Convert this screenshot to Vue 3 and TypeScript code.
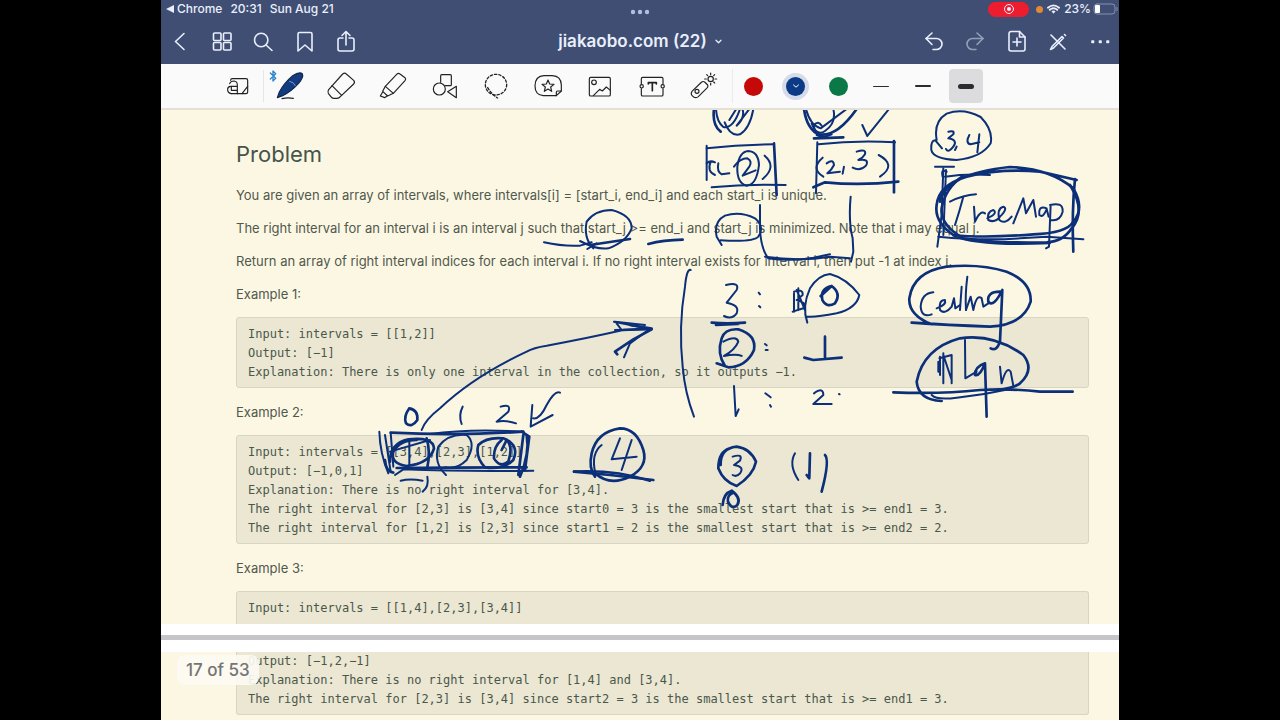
<script setup lang="ts">
import { ref } from 'vue'

interface Icon {
  label: string
  box: string
  paths: string[]
  faded?: boolean
}

interface InkGroup {
  x: number
  y: number
  thin: string[]
  thick?: string[]
}

const leftNav: Icon[] = [
  { label: 'Back', box: '0 0 24 24', paths: ['M16 4.5L7.5 12.5l8.500 8'] },
  {
    label: 'Thumbnails',
    box: '0 0 24 24',
    paths: ['M4.500 4h5.500a1 1 0 0 1 1 1v5.500a1 1 0 0 1-1 1H4.500a1 1 0 0 1-1-1V5a1 1 0 0 1 1-1z', 'M14.500 4H20a1 1 0 0 1 1 1v5.500a1 1 0 0 1-1 1h-5.500a1 1 0 0 1-1-1V5a1 1 0 0 1 1-1z', 'M4.500 13.500h5.500a1 1 0 0 1 1 1V20a1 1 0 0 1-1 1H4.500a1 1 0 0 1-1-1v-5.500a1 1 0 0 1 1-1z', 'M14.500 13.500H20a1 1 0 0 1 1 1V20a1 1 0 0 1-1 1h-5.500a1 1 0 0 1-1-1v-5.500a1 1 0 0 1 1-1z'],
  },
  { label: 'Search', box: '0 0 24 24', paths: ['M3.500 11a6.700 6.700 0 1 0 13.400 0a6.700 6.700 0 1 0-13.400 0', 'M15 16l6 5.500'] },
  { label: 'Bookmark', box: '0 0 24 24', paths: ['M5 5a1.500 1.500 0 0 1 1.500-1.500h11A1.500 1.500 0 0 1 19 5v17l-7-6-7 6z'] },
  { label: 'Share', box: '0 0 24 24', paths: ['M9 9H6a2 2 0 0 0-2 2v9a2 2 0 0 0 2 2h12a2 2 0 0 0 2-2v-9a2 2 0 0 0-2-2h-3', 'M12 16V2.500M8 6.500l4-4 4 4'] },
]

const rightNav: Icon[] = [
  { label: 'Undo', box: '0 0 24 24', paths: ['M10 4L4 9.500l6 6', 'M4 9.500h10.500a5.500 5.500 0 0 1 0 11H11'] },
  { label: 'Redo', box: '0 0 24 24', faded: true, paths: ['M14 4l6 5.500-6 6', 'M20 9.500H9.500a5.500 5.500 0 0 0 0 11H13'] },
  { label: 'Add page', box: '0 0 24 24', paths: ['M14.500 2.500H6A2 2 0 0 0 4 4.500V20a2 2 0 0 0 2 2h12a2 2 0 0 0 2-2V8z', 'M14.500 2.500V8H20', 'M12 9v8M8 13h8'] },
  { label: 'Stop editing', box: '0 0 24 24', paths: ['M5 6l14 14', 'M4.500 20.500l1.500-3L16 7.500l1.500 1.500L7.500 19z', 'M18.500 5.500l1 1'] },
  { label: 'More', box: '0 0 24 24', paths: ['M4 12h1.500v1.500H4z', 'M11.500 12H13v1.500h-1.500z', 'M19 12h1.500v1.500H19z'] },
]

const tools: Icon[] = [
  {
    label: 'Zoom window',
    box: '183 213 96 96',
    paths: ['M212 244Q212 239 217 239H258Q263 239 263 244V279Q263 284 258 284H214', 'M263 262L246 284', 'M209 254Q212 246 222 246Q232 247 232 258V284', 'M230 262H212Q203 263 203 270Q202 282 214 284', 'M214 262V274H230'],
  },
  { label: 'Pen', box: '339 213 96 96', paths: [] },
  { label: 'Eraser', box: '498 213 96 96', paths: ['M551 225Q557 220 562 225L584 244Q589 249 584 255L544 293Q540 298 534 298H524Q519 298 515 292L508 283Q505 278 509 272Z', 'M519 260L548 289'] },
  { label: 'Highlighter', box: '654 213 96 96', paths: ['M713 226Q718 221 723 225L738 236Q742 240 738 245L703 283L679 262Z', 'M679 262L671 277L686 291L703 283', 'M671 279L664 291L677 296L684 291'] },
  { label: 'Shapes', box: '807 213 96 96', paths: ['M842 250V230Q842 227 845 227H871Q874 227 874 230V257Q874 260 871 260H856', 'M820 270A18 18 0 1 0 856 270A18 18 0 1 0 820 270', 'M863 278L889 262V296Z'] },
  { label: 'Lasso', box: '3 213 96 96', paths: [] },
  { label: 'Stickers', box: '156 213 96 96', paths: ['M229 290H190Q165 288 165 260Q166 231 192 230H217Q243 231 244 258V276Z', 'M244 276H233Q229 276 229 280V290', 'M204 243L209 255L222 256L212 264L215 277L204 270L193 277L196 264L186 256L199 255Z'] },
  { label: 'Image', box: '312 213 96 96', paths: ['M332 235H387Q391 235 391 239V287Q391 291 387 291H332Q328 291 328 287V239Q328 235 332 235Z', 'M335 250A7 7 0 1 0 349 250A7 7 0 1 0 335 250', 'M340 290L359 271L367 276L379 264L391 274'] },
  { label: 'Text', box: '465 213 96 96', paths: ['M481 255V239Q481 235 485 235H542Q546 235 546 239V255', 'M481 269V287Q481 291 485 291H542Q546 291 546 287V269', 'M477 262A5 5 0 1 0 487 262A5 5 0 1 0 477 262', 'M540 262A5 5 0 1 0 550 262A5 5 0 1 0 540 262'] },
  { label: 'Laser pointer', box: '624 213 96 96', paths: ['M636 277L665 249Q669 246 674 249L683 258Q685 262 682 266L655 293Q648 299 640 293Q630 286 636 277Z', 'M645 277A6 6 0 1 0 657 277A6 6 0 1 0 645 277', 'M684 240A8 8 0 1 0 700 240A8 8 0 1 0 684 240', 'M692 222V227M692 253V258M674 240H679M705 240H710M680 227L683 230M701 249L704 252M704 227L701 230'] },
]

const colours = ['red', 'navy', 'green']
const widths = ['thin', 'medium', 'thick']
const colour = ref('navy')
const width = ref('thick')

const statement: string[] = [
  'You are given an array of intervals, where intervals[i] = [start_i, end_i] and each start_i is unique.',
  'The right interval for an interval i is an interval j such that start_j >= end_i and start_j is minimized. Note that i may equal j.',
  'Return an array of right interval indices for each interval i. If no right interval exists for interval i, then put -1 at index i.',
]

const example1 = `Input: intervals = [[1,2]]
Output: [−1]
Explanation: There is only one interval in the collection, so it outputs −1.`

const example2 = `Input: intervals = [[3,4],[2,3],[1,2]]
Output: [−1,0,1]
Explanation: There is no right interval for [3,4].
The right interval for [2,3] is [3,4] since start0 = 3 is the smallest start that is >= end1 = 3.
The right interval for [1,2] is [2,3] since start1 = 2 is the smallest start that is >= end2 = 2.`

const example3 = 'Input: intervals = [[1,4],[2,3],[3,4]]'

const example3Rest = `Output: [−1,2,−1]
Explanation: There is no right interval for [1,4] and [3,4].
The right interval for [2,3] is [3,4] since start2 = 3 is the smallest start that is >= end1 = 3.`

// Pen strokes, three units to the pixel, grouped by the area of the page they annotate
const ink: InkGroup[] = [
  {
    x: 690,
    y: 105,
    thin: [
      'M78 12Q80 50 100 66Q130 72 150 12', 'M104 52Q120 95 150 88Q180 70 190 12', 'M140 10L118 45M158 14Q165 40 140 62L178 12',
      'M348 12Q360 60 392 70L470 12', 'M374 82L372 60Q385 45 395 62', 'M430 12Q440 55 405 78Q380 95 365 55', 'M380 90Q400 100 425 88',
      'M517 60L532 93L597 12', 'M50 122V225', 'M50 130Q150 118 252 118', 'M65 247Q170 236 287 240',
      'M50 175Q60 165 75 172M62 170Q50 200 75 210', 'M85 175Q80 200 95 208L118 205', 'M132 185Q150 160 172 160Q188 168 178 185L158 212L197 196',
      'M175 138Q205 140 207 180Q200 240 170 242Q140 235 142 185Q148 140 175 138', 'M224 152Q262 185 218 222',
      'M382 112L378 265', 'M385 118Q500 105 615 112', 'M398 158Q360 190 400 215', 'M410 175Q430 160 432 180Q425 195 412 205L450 200',
      'M462 185L458 206', 'M500 140Q530 130 525 148Q518 160 505 165Q540 160 528 182Q510 200 488 188', 'M566 150Q622 180 570 215',
      'M95 420L80 395Q70 350 105 332Q150 318 195 340Q225 365 205 395Q190 412 92 406',
      'M210 300V370Q212 430 235 460Q300 470 370 458L420 448', 'M225 455Q330 470 420 455L480 460', 'M482 275Q475 350 488 400L490 440L483 470',
    ],
    thick: ['M72 12Q66 60 92 80', 'M342 12Q350 70 385 88Q440 98 500 12', 'M372 100L460 97', 'M252 115L260 270', 'M612 108V262', 'M370 247L405 232Q510 242 625 230'],
  },
  {
    x: 900,
    y: 105,
    thin: [
      'M126 130L106 106Q92 105 94 135Q100 162 170 165Q245 158 272 115Q280 75 242 36Q190 8 140 26Q100 50 110 105',
      'M145 80Q165 75 160 88L145 100Q175 105 160 125Q145 145 138 132', 'M170 125L165 135', 'M208 90Q195 115 212 118L238 112M238 88L232 142',
      'M105 185H162', 'M130 190L125 330L112 425', 'M138 195L130 390', 'M128 215Q122 190 140 200', 'M135 215Q200 205 270 210',
      'M115 395Q250 408 360 400L440 395L550 403', 'M160 392Q230 425 450 415',
      'M150 290Q190 270 228 268M190 275Q178 320 165 360', 'M222 305L225 350Q240 315 255 325',
      'M262 340Q295 325 280 315Q260 320 265 345Q285 355 300 335Q325 310 310 305Q290 310 298 345Q315 360 335 335',
      'M340 355L370 280L378 325L400 285L408 335', 'M440 310Q415 300 418 330Q430 340 440 312L446 335', 'M452 300L447 425L438 430M450 300Q490 290 488 320Q480 350 452 345',
    ],
    thick: [
      'M120 290Q140 205 330 186Q450 190 520 250Q555 310 520 350Q500 385 400 388Q250 400 160 390Q102 350 110 300Q115 240 200 215Q300 190 420 200L530 225',
      'M510 240Q560 320 515 370Q490 410 440 412Q270 415 190 400Q120 360 125 310Q135 250 190 212', 'M525 222Q515 320 520 440',
    ],
  },
  {
    x: 670,
    y: 260,
    thin: [
      'M62 30Q50 25 45 80Q25 200 38 320Q45 400 72 470', 'M168 75Q210 65 200 90L170 128Q210 135 200 160Q185 180 162 168',
      'M266 98L270 103M267 138L271 142', 'M412 188Q395 140 420 85Q445 45 480 42Q530 55 568 105Q560 145 500 160Q440 172 412 170',
      'M372 100V155M385 85V150M372 95Q400 85 398 105L380 120Q415 130 400 145L368 155M380 90L405 150',
      'M160 245Q200 225 205 245Q195 270 162 288Q200 280 215 288', 'M285 252L290 256M287 270H293',
      'M192 378L197 468L206 448', 'M286 400L302 412M300 435L303 440', 'M432 400Q460 380 460 405L430 432H485', 'M507 402L509 403',
    ],
    thick: [
      'M125 188Q170 192 225 188M138 195L205 192', 'M485 78Q450 85 457 120Q470 145 495 130Q515 100 485 78L452 108',
      'M155 235Q165 205 205 208Q260 225 252 270Q230 320 175 322L140 310M165 318Q140 280 155 235', 'M465 230V295M403 293L430 300L515 293',
    ],
  },
  {
    x: 880,
    y: 255,
    thin: [
      'M160 112Q125 115 122 155Q125 190 155 178', 'M170 160Q200 150 195 135Q175 135 180 165Q195 180 215 155L222 130L226 160L240 150', 'M245 95L240 165M262 65Q255 120 258 165',
      'M258 165L272 125L280 165Q290 115 305 130L310 155L325 145', 'M180 305V360M190 295V385M178 310L215 300V385M190 300L215 375M175 320V350',
      'M255 255L256 370L290 350', 'M360 335L365 385Q380 330 392 350L400 392', 'M155 420Q170 436 230 428Q310 420 390 402',
    ],
    thick: [
      'M155 208Q85 180 88 130Q100 50 200 35Q300 25 380 50Q455 80 452 140Q430 210 330 215Q200 210 95 203', 'M360 110Q320 110 325 140Q340 160 367 105L360 260Q350 290 332 280',
      'M185 438Q115 435 110 380Q130 280 240 250Q340 235 430 300Q465 345 420 385Q400 400 350 405', 'M40 412Q180 418 300 405Q400 400 480 410L578 410', 'M315 325Q285 335 285 360Q300 365 315 325L320 485',
    ],
  },
  {
    x: 370,
    y: 380,
    thin: [
      'M278 80Q265 105 275 132', 'M487 75L482 140L548 105M490 115Q510 118 530 75Q555 30 570 38', 'M28 155Q30 220 55 280M45 165L62 275M62 158L70 260',
      'M118 180V255M60 215L180 180', 'M228 285Q190 250 205 200Q235 160 290 165Q320 190 290 240Q260 270 225 262', 'M92 302Q120 295 158 302M172 290Q178 320 158 335',
      'M75 285L100 268Q280 275 490 272', 'M180 162Q300 145 460 155', 'M392 80Q425 70 415 95L380 125Q410 120 438 130',
    ],
    thick: [
      'M118 85Q100 110 108 130Q125 145 142 120Q145 90 118 85', 'M62 158Q260 168 460 155', 'M80 264Q260 262 470 262',
      'M470 165Q480 220 450 290M460 165L445 285M455 155L478 170L465 270', 'M60 245Q60 190 115 178Q190 170 192 205Q180 250 110 258Q60 250 70 215Q90 180 140 180', 'M170 175Q182 215 172 262',
      'M345 262Q315 230 325 195Q350 170 400 175Q450 195 430 240Q400 270 345 262', 'M395 180Q370 200 372 235Q390 265 415 245Q430 200 410 180L395 210', 'M45 240Q48 275 70 278',
    ],
  },
  {
    x: 400,
    y: 300,
    thin: ['M65 390Q75 360 120 325Q220 230 380 155Q400 143 440 137Q560 115 670 90', 'M645 65L735 75', 'M642 65L755 88L645 90', 'M665 90L650 70', 'M745 90L690 130L672 172'],
    thick: ['M755 88L700 118L645 155L652 163', 'M690 75L755 86L670 90'],
  },
  {
    x: 560,
    y: 410,
    thin: ['M125 105Q92 130 106 190', 'M705 130Q685 165 715 210', 'M518 140Q550 130 540 152L522 165Q555 170 540 190Q530 202 518 195', 'M180 85L155 148L230 140M215 90L185 180'],
    thick: [
      'M105 190Q150 230 210 200Q265 170 250 120Q230 55 180 55Q110 65 95 130Q85 175 105 200', 'M42 185Q100 190 150 195L280 210', 'M42 185Q160 178 270 212',
      'M510 115Q475 125 475 175Q490 215 530 228Q580 195 588 155Q570 115 530 110Q480 115 482 165', 'M488 285Q490 250 515 242Q545 265 532 285Q515 300 504 275Q500 255 520 248', 'M750 130L748 205L740 195', 'M795 135Q810 150 785 245',
    ],
  },
  {
    x: 530,
    y: 195,
    thin: ['M190 160Q160 130 170 80Q195 45 245 45Q305 60 305 100Q290 140 235 160Q200 165 150 138', 'M42 142Q100 155 150 152L185 142', 'M172 162L200 145'],
    thick: ['M180 150L300 132', 'M355 147Q400 135 458 134'],
  },
]
</script>

<template>
  <div class="screen">
    <main class="tablet">
      <header class="top">
        <div class="status">
          <span class="status-left">
            <a href="#" class="return"><svg viewBox="0 0 8 8" aria-hidden="true"><path d="M8 0v8L0 4z" /></svg>Chrome</a>
            <span>20:31</span>
            <span>Sun Aug 21</span>
          </span>
          <span class="status-right">
            <span class="recording"><svg viewBox="0 0 12 12" aria-hidden="true"><circle cx="6" cy="6" r="4.500" /><circle class="core" cx="6" cy="6" r="2" /></svg></span>
            <span class="mic"></span>
            <svg class="wifi" viewBox="0 0 14 10" aria-hidden="true"><path d="M1 3.600Q7-1.400 13 3.600M3 5.900Q7 2.600 11 5.900" /><path class="dot" d="M4.800 7.500Q7 5.800 9.200 7.500L7 10z" /></svg>
            <span>23%</span>
            <svg class="battery" viewBox="0 0 25 12" aria-hidden="true"><rect class="shell" x="1" y="1" width="21" height="10" rx="3" /><rect class="charge" x="2" y="2" width="5" height="8" rx="1" /><path class="shell" d="M24 4.500v3" /></svg>
          </span>
          <svg class="multitask" viewBox="0 0 20 6" aria-hidden="true"><circle cx="3" cy="3" r="2.200" /><circle cx="10" cy="3" r="2.200" /><circle cx="17" cy="3" r="2.200" /></svg>
        </div>
        <nav class="nav">
          <div class="nav-group">
            <button v-for="icon in leftNav" :key="icon.label" type="button" :aria-label="icon.label">
              <svg :viewBox="icon.box"><path v-for="d in icon.paths" :key="d" :d="d" /></svg>
            </button>
          </div>
          <button type="button" class="title">
            jiakaobo.com (22)
            <svg viewBox="0 0 8 6" aria-hidden="true"><path d="M1 1.500l3 3 3-3" /></svg>
          </button>
          <div class="nav-group">
            <button v-for="icon in rightNav" :key="icon.label" type="button" :aria-label="icon.label" :class="{ faded: icon.faded }">
              <svg :viewBox="icon.box"><path v-for="d in icon.paths" :key="d" :d="d" /></svg>
            </button>
          </div>
        </nav>
      </header>

      <div class="toolbar" role="toolbar" aria-label="Drawing tools">
        <div class="tools">
          <button v-for="tool in tools" :key="tool.label" type="button" :aria-label="tool.label">
            <svg :viewBox="tool.box">
              <path v-for="d in tool.paths" :key="d" :d="d" />
              <template v-if="tool.label === 'Pen'">
                <path class="nib" d="M352 296L358 279Q372 252 398 230Q418 217 427 224Q432 234 415 254Q392 279 368 290Z" />
                <path class="grip" d="M389 247Q402 249 406 260" />
                <path d="M366 299Q382 295 400 298" />
              </template>
              <ellipse v-if="tool.label === 'Lasso'" class="dashed" cx="51" cy="257" rx="32" ry="31" />
              <path v-if="tool.label === 'Lasso'" class="dashed" d="M26 266Q38 286 56 297" />
              <path v-if="tool.label === 'Text'" class="bold" d="M502 255V251H526V255M514 251V275" />
            </svg>
            <svg v-if="tool.label === 'Pen'" class="bluetooth" viewBox="328 210 24 36" aria-hidden="true"><path d="M332 219L348 235L340 243V213L348 221L332 237" /></svg>
          </button>
        </div>
        <div class="palette">
          <button v-for="c in colours" :key="c" type="button" :aria-label="c" :aria-pressed="colour === c" @click="colour = c">
            <span class="swatch" :class="[c, { chosen: colour === c }]">
              <svg v-if="colour === c" viewBox="0 0 8 6"><path d="M1.500 2l2.500 2.200L6.500 2" /></svg>
            </span>
          </button>
          <button v-for="w in widths" :key="w" type="button" :aria-label="w" :aria-pressed="width === w" @click="width = w">
            <span class="stroke-cell" :class="{ chosen: width === w }"><span class="stroke" :class="w"></span></span>
          </button>
        </div>
      </div>

      <div class="document">
        <article class="page first">
          <h1>Problem</h1>
          <p v-for="line in statement" :key="line">{{ line }}</p>
          <p>Example 1:</p>
          <pre>{{ example1 }}</pre>
          <p>Example 2:</p>
          <pre>{{ example2 }}</pre>
          <p>Example 3:</p>
          <pre class="cut-below">{{ example3 }}</pre>
        </article>
        <div class="page-gap"></div>
        <article class="page">
          <pre class="cut-above">{{ example3Rest }}</pre>
        </article>
        <svg class="ink" viewBox="161 110 958 610" aria-hidden="true">
          <g v-for="group in ink" :key="`${group.x}-${group.y}`" :transform="`translate(${group.x} ${group.y}) scale(0.3333)`">
            <path v-for="d in group.thin" :key="d" :d="d" />
            <path v-for="d in group.thick" :key="d" class="heavy" :d="d" />
          </g>
        </svg>
        <div class="page-count">17 of 53</div>
      </div>
    </main>
  </div>
</template>

<style>
body {
  background: #000;
}
</style>

<style scoped>
.screen {
  box-sizing: border-box;
  min-height: 100vh;
  max-height: 100vh;
  padding: 0 161px;
  overflow: hidden;
  background: #000;
  font-family: Inter, "Liberation Sans", sans-serif;
}

.tablet {
  display: flex;
  flex-direction: column;
  min-height: 100vh;
}

button {
  display: flex;
  align-items: center;
  justify-content: center;
  padding: 0;
  border: 0;
  background: none;
  color: inherit;
  font: inherit;
}

svg {
  fill: none;
  stroke: currentColor;
  stroke-linecap: round;
  stroke-linejoin: round;
}

.top {
  background: #3f4e72;
  color: #e9effc;
}

.status {
  position: relative;
  display: flex;
  justify-content: space-between;
  height: 18px;
  padding: 0 5px;
  font-size: 12px;
  line-height: 18px;
  font-weight: 500;
}

.status-left {
  display: flex;
  gap: 8px;
}

.return {
  display: flex;
  align-items: center;
  gap: 3px;
  color: inherit;
  text-decoration: none;
}

.return svg {
  width: 8px;
  height: 8px;
  fill: currentColor;
  stroke: none;
}

.status-right {
  display: flex;
  align-items: center;
  gap: 4px;
}

.recording {
  display: flex;
  align-items: center;
  justify-content: center;
  width: 41px;
  height: 15px;
  margin-right: 3px;
  border-radius: 8px;
  background: #ed1c2e;
}

.recording svg {
  width: 12px;
  height: 12px;
}

.core {
  fill: currentColor;
  stroke: none;
}

.mic {
  width: 7px;
  height: 7px;
  border-radius: 50%;
  background: #e08a35;
}

.wifi {
  width: 13px;
  height: 10px;
  stroke-width: 2;
}

.wifi .dot {
  fill: currentColor;
  stroke: none;
}

.battery {
  width: 25px;
  height: 12px;
  margin-left: -2px;
  margin-right: -4px;
}

.shell {
  stroke: #8490ae;
}

.charge {
  fill: #fff;
  stroke: none;
}

.multitask {
  position: absolute;
  top: 9px;
  left: 50%;
  width: 20px;
  height: 6px;
  margin-left: -10px;
  fill: #b3c0e2;
  stroke: none;
}

.nav {
  display: flex;
  align-items: center;
  justify-content: space-between;
  height: 46px;
  padding: 0 1px;
}

.nav-group {
  display: flex;
  justify-content: space-between;
  width: 202px;
}

.nav-group button {
  width: 36px;
  height: 36px;
}

.nav-group svg {
  width: 24px;
  height: 24px;
  stroke-width: 1.600;
}

.nav-group .faded {
  opacity: 0.5;
}

.title {
  gap: 8px;
  font-size: 17px;
  font-weight: 600;
  white-space: nowrap;
}

.title svg {
  width: 7px;
  height: 5px;
  stroke-width: 1.500;
}

.toolbar {
  display: flex;
  align-items: center;
  height: 44px;
  padding-left: 51px;
  border-bottom: 2px solid #e4e1d4;
  background: #fafafa;
  color: #222;
}

.tools {
  display: flex;
  width: 518px;
}

.tools button {
  position: relative;
  flex: 1;
  height: 32px;
}

.tools button:first-child {
  margin-left: -1px;
  box-shadow: -5px 0 #fafafa, 1px 0 #e6e6ea;
}

.tools svg {
  width: 32px;
  height: 32px;
  stroke-width: 3.500;
}

.tools .nib {
  fill: #123b80;
  stroke: #14264c;
}

.tools .grip {
  stroke: #7e9bd0;
  stroke-width: 3;
}

.tools .dashed {
  stroke-width: 4;
  stroke-dasharray: 7 6;
}

.tools .bold {
  stroke-width: 5;
}

.tools .bluetooth {
  position: absolute;
  top: 0;
  left: 6px;
  width: 8px;
  height: 12px;
  color: #2b86c8;
  stroke-width: 4;
}

.palette {
  display: flex;
  width: 255px;
  margin-left: 2px;
}

.palette button {
  flex: 1;
  height: 34px;
}

.palette button:first-child {
  box-shadow: inset 1px 0 #ebebee;
}

.swatch {
  display: flex;
  align-items: center;
  justify-content: center;
  width: 19px;
  height: 19px;
  border-radius: 50%;
  color: #fff;
}

.swatch.chosen {
  box-shadow: 0 0 0 4px #d5dbe8;
}

.swatch svg {
  width: 8px;
  height: 6px;
}

.red {
  background: #c50808;
}

.navy {
  background: #0b3a86;
}

.green {
  background: #0b7847;
}

.stroke-cell {
  display: flex;
  align-items: center;
  justify-content: center;
  width: 34px;
  height: 34px;
  border-radius: 4px;
}

.stroke-cell.chosen {
  background: #dcdcde;
}

.stroke {
  width: 16px;
  border-radius: 3px;
  background: #2c2c2e;
}

.stroke.thin {
  height: 1px;
}

.stroke.medium {
  height: 2px;
}

.stroke.thick {
  height: 5px;
}

.document {
  position: relative;
  flex: 1;
  background: #fcf7e2;
  color: #50594e;
}

.page {
  padding: 0 30px 0 75px;
}

.page.first {
  padding-top: 29px;
}

h1 {
  margin: 0 0 16px;
  color: #46544b;
  font-size: 22px;
  line-height: 30px;
  font-weight: 400;
}

p {
  margin: 0 0 13px;
  font-size: 13px;
  line-height: 20px;
  white-space: nowrap;
}

pre {
  margin: 0 0 14px;
  padding: 7px 11px 5px;
  border: 1px solid #d8d5c4;
  border-radius: 3px;
  background: #ebe7d3;
  color: #4a574b;
  font-family: "DejaVu Sans Mono", monospace;
  font-size: 12px;
  line-height: 19px;
}

.cut-below {
  margin: 0;
  padding-bottom: 6px;
  border-bottom: 0;
  border-radius: 3px 3px 0 0;
}

.cut-above {
  padding-top: 0;
  border-top: 0;
  border-radius: 0 0 3px 3px;
}

.page-gap {
  height: 5px;
  border-top: 11px solid #fff;
  border-bottom: 12px solid #fff;
  background: #c6c6ca;
}

.ink {
  position: absolute;
  top: 0;
  left: 0;
  width: 958px;
  height: 610px;
  color: #0b2f78;
  stroke-width: 6;
}

.heavy {
  stroke-width: 8;
}

.page-count {
  position: absolute;
  top: 545px;
  left: 16px;
  padding: 2px 9px;
  border-radius: 8px;
  background: rgba(252, 250, 242, 0.92);
  color: #747474;
  font-size: 17px;
  line-height: 26px;
  font-weight: 500;
}
</style>
